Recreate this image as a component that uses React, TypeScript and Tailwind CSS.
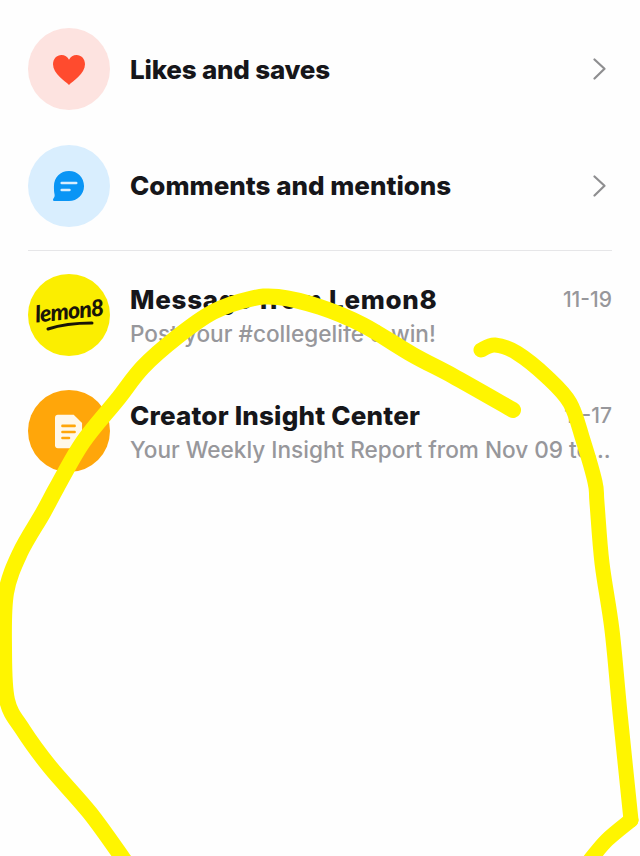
import React from "react";

const inter = { fontFamily: "Inter, 'Liberation Sans', sans-serif" };

type P = [number, number];

function smooth(pts: P[]) {
  let d = `M${pts[0][0]} ${pts[0][1]}`;
  for (let i = 0; i < pts.length - 1; i++) {
    const p0 = pts[Math.max(i - 1, 0)];
    const p1 = pts[i];
    const p2 = pts[i + 1];
    const p3 = pts[Math.min(i + 2, pts.length - 1)];
    d += `C${p1[0] + (p2[0] - p0[0]) / 6} ${p1[1] + (p2[1] - p0[1]) / 6} ${p2[0] - (p3[0] - p1[0]) / 6} ${p2[1] - (p3[1] - p1[1]) / 6} ${p2[0]} ${p2[1]}`;
  }
  return d;
}

const leftStroke: P[] = [
  [513, 410], [453, 376], [413, 355], [363, 325], [320, 307], [278, 297], [250, 299], [213, 312], [177, 337], [143, 367], [117, 400],
  [83, 442], [57, 487], [43, 513], [20, 553], [6, 593], [4, 647], [7, 700], [23, 730], [50, 767], [90, 813], [124, 860],
];
const rightStroke: P[] = [
  [481, 350], [495, 345], [517, 353], [547, 377], [570, 403], [583, 440], [595, 482], [597, 503], [602, 563], [612, 630], [620, 713], [631, 820],
];
const rightTail: P[] = [[631, 820], [607, 840], [590, 860]];

function Chevron() {
  return (
    <svg width="14" height="22" viewBox="0 0 14 22" fill="none" className="shrink-0">
      <path d="M1.5 1.5L11.500 10.800L1.5 20.500" stroke="#8e8e90" strokeWidth="2.2" strokeLinecap="round" strokeLinejoin="round" />
    </svg>
  );
}

function Circle({ className, children }: { className: string; children: React.ReactNode }) {
  return <div className={`flex h-[82px] w-[82px] shrink-0 items-center justify-center overflow-hidden rounded-full ${className}`}>{children}</div>;
}

function TopRow({ bg, icon, title, className, titleClass }: { bg: string; icon: React.ReactNode; title: string; className?: string; titleClass?: string }) {
  return (
    <div className={`flex items-center pr-[33px] ${className ?? ""}`}>
      <Circle className={bg}>{icon}</Circle>
      <div className={`ml-[20px] flex-1 text-[26px] font-extrabold leading-[30px] text-[#16161a] ${titleClass ?? ""}`}>{title}</div>
      <Chevron />
    </div>
  );
}

function MsgRow({ avatar, title, sub, date, className, titleClass }: { avatar: React.ReactNode; title: string; sub: string; date: string; className?: string; titleClass?: string }) {
  return (
    <div className={`flex items-center ${className ?? ""}`}>
      {avatar}
      <div className="ml-[20px] min-w-0 flex-1 pr-[28px] pt-[2px]">
        <div className="flex items-center justify-between">
          <div className={`text-[26px] font-extrabold leading-[32px] text-[#16161a] ${titleClass ?? ""}`}>{title}</div>
          <div className="pt-[1px] text-[21px] font-medium leading-[32px] text-[#97979b]">{date}</div>
        </div>
        <div className="mt-[3px] whitespace-nowrap text-[22.600px] font-medium leading-[30px] text-[#97979b]">{sub}</div>
      </div>
    </div>
  );
}

export default function App() {
  return (
    <div className="relative h-[856px] w-[640px] overflow-hidden bg-[#fefefe]" style={inter}>
      <div className="pl-[28px] pt-[28px]">
        <TopRow
          bg="bg-[#fde3e0]"
          title="Likes and saves"
          titleClass="pt-[2px] tracking-[-0.2px]"
          icon={
            <svg width="34" height="32" viewBox="0 0 36 34" className="-ml-[1px] mt-[1px]">
              <path d="M18 33C14 29 1 21 1 11C1 5 5 1 10 1C13.500 1 16.500 2.800 18 6C19.500 2.800 22.500 1 26 1C31 1 35 5 35 11C35 21 22 29 18 33Z" fill="#ff4b2e" />
            </svg>
          }
        />
        <TopRow
          className="mt-[35px]"
          bg="bg-[#d9eefe]"
          title="Comments and mentions"
          icon={
            <svg width="33" height="33" viewBox="0 0 34 34" className="-ml-[1px]">
              <path d="M17.500 1C26.300 1 33 7.500 33 16.500C33 25.500 26 32 17.500 32H3C1 32 .5 30.500 1.500 29.300C2.800 27.800 3 26.500 2.500 24.500C2 22.500 2 19 2 16.500C2 7.500 8.700 1 17.500 1Z" fill="#0a95f5" />
              <path d="M10 13.500H25" stroke="#d9eefe" strokeWidth="2.600" strokeLinecap="round" />
              <path d="M10 20.500H18" stroke="#d9eefe" strokeWidth="2.600" strokeLinecap="round" />
            </svg>
          }
        />
        <div className="mr-[28px] mt-[23px] h-px bg-[#e6e6e8]" />
        <MsgRow
          className="mt-[23px]"
          title="Message from Lemon8"
          titleClass="tracking-[0.7px]"
          sub="Post your #collegelife & win!"
          date="11-19"
          avatar={
            <Circle className="relative bg-[#fbee00]">
              <div className="-mt-[10px] -rotate-[6deg] text-[23px] font-black italic leading-none tracking-[-0.8px] text-[#1a1508]" style={{ fontFamily: "Lato, sans-serif" }}>
                lemon8
              </div>
              <svg className="absolute left-[18px] top-[46px]" width="48" height="12" viewBox="0 0 48 12" fill="none">
                <path d="M2 9C14 5 32 3 46 3" stroke="#1a1508" strokeWidth="3" strokeLinecap="round" />
              </svg>
            </Circle>
          }
        />
        <MsgRow
          className="mt-[34px]"
          title="Creator Insight Center"
          titleClass="tracking-[0.2px]"
          sub="Your Weekly Insight Report from Nov 09 to..."
          date="11-17"
          avatar={
            <Circle className="bg-[#ffa60a]">
              <svg width="28" height="35" viewBox="0 0 30 36" className="-ml-[1px]">
                <path d="M3 0H20L29 9V33C29 34.700 27.700 36 26 36H3C1.300 36 0 34.700 0 33V3C0 1.300 1.300 0 3 0Z" fill="#fff8ea" />
                <path d="M8 12H21M8 18.500H21M8 25H15" stroke="#ffa60a" strokeWidth="2.800" strokeLinecap="round" />
              </svg>
            </Circle>
          }
        />
      </div>

      <svg className="pointer-events-none absolute left-0 top-0" width="640" height="856" viewBox="0 0 640 856" fill="none">
        <path d={smooth(leftStroke)} stroke="#fff500" strokeWidth="16" strokeLinecap="round" strokeLinejoin="round" />
        <path d={smooth(rightStroke)} stroke="#fff500" strokeWidth="15" strokeLinecap="round" strokeLinejoin="round" />
        <path d={smooth(rightTail)} stroke="#fff500" strokeWidth="15" strokeLinecap="round" strokeLinejoin="round" />
      </svg>
    </div>
  );
}
